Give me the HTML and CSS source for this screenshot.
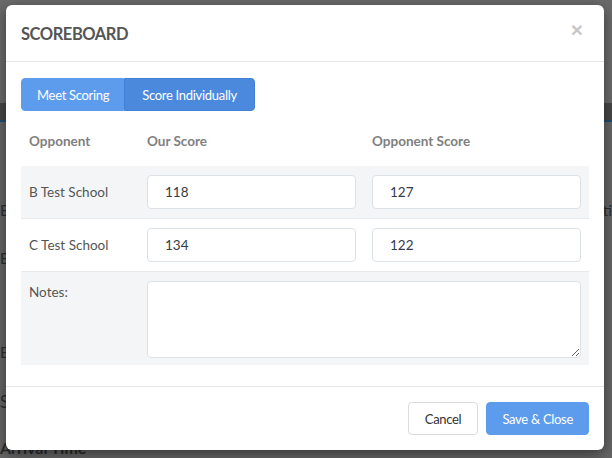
FILE: index.html
```html
<!DOCTYPE html>
<html>
<head>
<meta charset="utf-8">
<link rel="stylesheet" href="styles.css">
</head>
<body>
<div class="page">
  <div class="bg-top"></div>
  <div class="bg-nav"></div>
  <div class="bg-line"></div>
  <div class="bg-main">
    <div class="bg-row r1"><span>Event</span><span class="bg-right">Multi</span></div>
    <div class="bg-row r2"><span>Bus</span></div>
    <div class="bg-row r3"><span>Event</span></div>
    <div class="bg-row r4"><span class="big">Schedule</span></div>
    <div class="bg-row r5"><span class="arrival">Arrival Time</span></div>
  </div>
</div>

<div class="modal">
  <div class="modal-header">
    <h4 class="modal-title">SCOREBOARD</h4>
    <button class="close" type="button">&times;</button>
  </div>
  <div class="modal-body">
    <div class="btn-group">
      <button class="seg" type="button">Meet Scoring</button>
      <button class="seg active" type="button">Score Individually</button>
    </div>
    <table class="scores">
      <colgroup><col class="c1"><col class="c2"><col class="c3"></colgroup>
      <thead>
        <tr><th>Opponent</th><th>Our Score</th><th>Opponent Score</th></tr>
      </thead>
      <tbody>
        <tr class="shaded">
          <td class="label">B Test School</td>
          <td><input class="field" type="text" value="118"></td>
          <td><input class="field" type="text" value="127"></td>
        </tr>
        <tr>
          <td class="label">C Test School</td>
          <td><input class="field" type="text" value="134"></td>
          <td><input class="field" type="text" value="122"></td>
        </tr>
        <tr class="shaded notes-row">
          <td class="label top">Notes:</td>
          <td colspan="2"><textarea class="notes"></textarea></td>
        </tr>
      </tbody>
    </table>
  </div>
  <div class="modal-footer">
    <button class="btn btn-default" type="button">Cancel</button>
    <button class="btn btn-primary" type="button">Save &amp; Close</button>
  </div>
</div>
</body>
</html>
```

FILE: styles.css
```css
* { box-sizing: border-box; }

html, body {
  margin: 0;
  padding: 0;
  width: 612px;
  height: 458px;
  overflow: hidden;
}

body {
  font-family: "Lato", "Noto Sans", sans-serif;
  background: #656565;
  position: relative;
}

/* ---------- dimmed page behind the modal ---------- */
.page {
  height: 458px;
  display: flex;
  flex-direction: column;
}
.bg-top { height: 104px; background: #6a6a6a; }
.bg-nav { height: 17px; background: #474747; }
.bg-line { height: 2px; background: #1f4b6e; }
.bg-main {
  flex: 1;
  background: #656565;
  color: #2e2e2e;
  font-size: 15px;
  display: flex;
  flex-direction: column;
}
.bg-row {
  display: flex;
  justify-content: space-between;
  line-height: 20px;
}
.bg-right { margin-right: 0; }
.r1 { margin-top: 78px; }
.r2 { margin-top: 28px; }
.r3 { margin-top: 74px; }
.r4 { margin-top: 30px; }
.big { font-size: 17px; }
.r5 { margin-top: 26px; }
.arrival { font-weight: 700; font-size: 16px; color: #2a2a2a; }

/* ---------- modal ---------- */
.modal {
  position: absolute;
  top: 5px;
  left: 6px;
  width: 598px;
  background: #fff;
  border-radius: 6px;
  box-shadow: 0 4px 14px rgba(0, 0, 0, 0.45);
  color: #555;
}

.modal-header {
  display: flex;
  justify-content: space-between;
  align-items: flex-start;
  padding: 16px 15px 14px 15px;
  border-bottom: 1px solid #e5e5e5;
  height: 57px;
}
.modal-title {
  margin: 0;
  font-size: 16.5px;
  line-height: 27px;
  font-weight: 700;
  color: #555;
  letter-spacing: -0.45px;
}
.close {
  border: 0;
  background: none;
  padding: 0;
  margin: 0 6px 0 0;
  font-family: "Liberation Sans", sans-serif;
  font-size: 21px;
  line-height: 18px;
  font-weight: 700;
  color: #c8c8c8;
}

.modal-body {
  padding: 16px 15px 21px 15px;
}

.btn-group {
  display: flex;
}
.seg {
  font-family: inherit;
  font-size: 13px;
  letter-spacing: -0.3px;
  height: 33px;
  color: #fff;
  background: #5d9cec;
  border: 1px solid #5d9cec;
  margin: 0;
  cursor: pointer;
}
.seg:first-child {
  border-radius: 4px 0 0 4px;
  padding: 0 14px 0 15px;
}
.seg.active {
  background: #4a89dc;
  border-color: #4280d6;
  border-radius: 0 4px 4px 0;
  padding: 0 17px;
}

.scores {
  width: 568px;
  margin-top: 10px;
  border-collapse: collapse;
  table-layout: fixed;
  font-size: 13.5px;
}
.c1 { width: 118px; }
.c2 { width: 225px; }
.c3 { width: 225px; }

.scores th {
  text-align: left;
  color: #808080;
  font-weight: 700;
  padding: 10px 8px 15px 8px;
  line-height: 20px;
}
.scores td {
  padding: 9px 8px;
  border-top: 1px solid #e7eaed;
  vertical-align: middle;
}
.scores tbody tr:first-child td { border-top: 0; }
.scores tr.shaded td { background: #f3f5f7; }
.scores td.label { color: #555; line-height: 20px; }
.scores td.top { vertical-align: top; padding-top: 10px; }
.notes-row td { padding-bottom: 7px; }

.field {
  display: block;
  width: 100%;
  height: 34px;
  border: 1px solid #dce3e8;
  border-radius: 4px;
  background: #fff;
  padding: 0 17px;
  font-family: inherit;
  font-size: 13.5px;
  color: #363b48;
  outline: none;
}
.notes {
  display: block;
  width: 100%;
  height: 77px;
  border: 1px solid #dce3e8;
  border-radius: 4px;
  background: #fff;
  resize: vertical;
  margin: 0;
}

.modal-footer {
  display: flex;
  justify-content: flex-end;
  gap: 8px;
  padding: 15px;
  border-top: 1px solid #e5e5e5;
}
.btn {
  font-family: inherit;
  font-size: 13px;
  letter-spacing: -0.3px;
  height: 33px;
  border-radius: 4px;
  padding: 0 15px;
  cursor: pointer;
}
.btn-default {
  background: #fff;
  border: 1px solid #dcdcdc;
  color: #333;
  padding: 0 16px;
}
.btn-primary {
  background: #5d9cec;
  border: 1px solid #5d9cec;
  color: #fff;
}
```
